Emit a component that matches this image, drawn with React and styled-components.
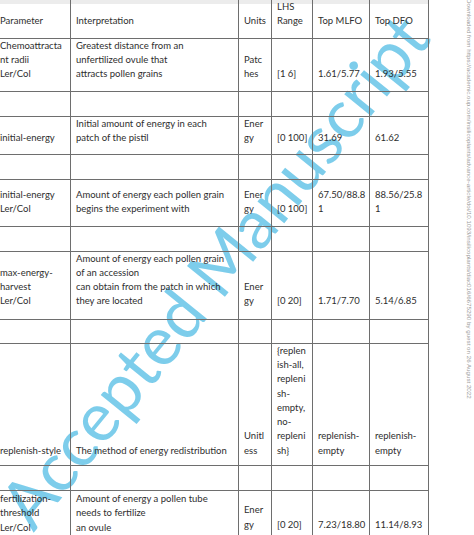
import React from "react";
import styled, { createGlobalStyle } from "styled-components";

const GlobalStyle = createGlobalStyle`
  html, body { margin: 0; padding: 0; background: #fff; }
  body { font-family: Lato, "Liberation Sans", sans-serif; }
`;

const Page = styled.div`
  position: relative;
  width: 474px;
  height: 535px;
  overflow: hidden;
  display: flex;
  align-items: flex-start;
  background: #fff;
`;

const Table = styled.table`
  position: relative;
  z-index: 1;
  flex: none;
  border-collapse: collapse;
  table-layout: fixed;
  width: 434px;
  margin: -1px 0 0 -6px;
  font-family: Lato, "Liberation Sans", sans-serif;
  font-size: 9.5px;
  line-height: 14.25px;
  color: #2e2e2e;
`;

const Row = styled.tr`
  height: ${(p) => p.$h - 0.5}px;
`;

const Cell = styled.td`
  border: 1px solid #6e6e6e;
  padding: 0 2px ${(p) => p.$pb}px 5px;
  vertical-align: bottom;
  white-space: nowrap;
  overflow: hidden;
`;

const HeadCell = styled(Cell).attrs({ as: "th" })`
  font-weight: normal;
  text-align: left;
  box-shadow: inset 0 4px 0 #ececec;
`;

const Line = styled.div``;

const SideNote = styled.div`
  flex: none;
  margin-left: auto;
  margin-right: 1px;
  margin-top: -1px;
  writing-mode: vertical-rl;
  white-space: nowrap;
  font-family: "Liberation Sans", Arial, sans-serif;
  font-size: 6.2px;
  line-height: 7px;
  color: #9a9a9a;
`;

const Watermark = styled.div`
  position: absolute;
  left: 213px;
  top: 270px;
  transform: translate(-50%, -50%) rotate(-51deg);
  font-family: Lato, "Liberation Sans", sans-serif;
  font-size: 68px;
  line-height: 1;
  white-space: nowrap;
  color: rgba(92, 192, 230, 0.8);
  pointer-events: none;
  z-index: 0;
`;

const widths = [76, 168, 33, 41, 57, 59];

const header = ["Parameter", "Interpretation", "Units", ["LHS", "Range"], "Top MLFO", "Top DFO"];

const rows = [
  {
    h: 54,
    pb: 10,
    cells: [
      ["Chemoattracta", "nt radii", "Ler/Col"],
      ["Greatest distance from an", "unfertilized ovule that", "attracts pollen grains"],
      ["Patc", "hes"],
      ["[1 6]"],
      ["1.61/5.77"],
      ["1.93/5.55"],
    ],
  },
  { h: 24, spacer: true },
  {
    h: 38,
    pb: 9,
    cells: [
      ["initial-energy"],
      ["Initial amount of energy in each", "patch of the pistil"],
      ["Ener", "gy"],
      ["[0 100]"],
      ["31.69"],
      ["61.62"],
    ],
  },
  { h: 25, spacer: true },
  {
    h: 48,
    pb: 9.5,
    cells: [
      ["initial-energy", "Ler/Col"],
      ["Amount of energy each pollen grain", "begins the experiment with"],
      ["Ener", "gy"],
      ["[0 100]"],
      ["67.50/88.8", "1"],
      ["88.56/25.8", "1"],
    ],
  },
  { h: 25, spacer: true },
  {
    h: 67,
    pb: 10,
    cells: [
      ["max-energy-", "harvest", "Ler/Col"],
      [
        "Amount of energy each pollen grain",
        "of an accession",
        "can obtain from the patch in which",
        "they are located",
      ],
      ["Ener", "gy"],
      ["[0 20]"],
      ["1.71/7.70"],
      ["5.14/6.85"],
    ],
  },
  { h: 24, spacer: true },
  {
    h: 122,
    pb: 7,
    cells: [
      ["replenish-style"],
      ["The method of energy redistribution"],
      ["Unitl", "ess"],
      ["{replen", "ish-all,", "repleni", "sh-", "empty,", "no-", "repleni", "sh}"],
      ["replenish-", "empty"],
      ["replenish-", "empty"],
    ],
  },
  { h: 26, spacer: true },
  {
    h: 54,
    pb: [9, 9, 12, 12, 12, 12],
    cells: [
      ["fertilization-", "threshold", "Ler/Col"],
      ["Amount of energy a pollen tube", "needs to fertilize", "an ovule"],
      ["Ener", "gy"],
      ["[0 20]"],
      ["7.23/18.80"],
      ["11.14/8.93"],
    ],
  },
];

const renderLines = (c) =>
  (Array.isArray(c) ? c : [c]).map((t, i) => <Line key={i}>{t}</Line>);

const padFor = (pb, i) => (Array.isArray(pb) ? pb[i] : pb);

export default function App() {
  return (
    <>
      <GlobalStyle />
      <Page>
        <Watermark>Accepted Manuscript</Watermark>
        <Table>
          <colgroup>
            {widths.map((w, i) => (
              <col key={i} style={{ width: w }} />
            ))}
          </colgroup>
          <tbody>
            <Row $h={39}>
              {header.map((h, i) => (
                <HeadCell key={i} $pb={9}>
                  {renderLines(h)}
                </HeadCell>
              ))}
            </Row>
            {rows.map((r, ri) => (
              <Row key={ri} $h={r.h}>
                {r.spacer
                  ? widths.map((_, i) => (
                      <Cell key={i} $pb={9}>
                        &nbsp;
                      </Cell>
                    ))
                  : r.cells.map((c, i) => (
                      <Cell key={i} $pb={padFor(r.pb, i)}>
                        {renderLines(c)}
                      </Cell>
                    ))}
              </Row>
            ))}
          </tbody>
        </Table>
        <SideNote>
          Downloaded from https://academic.oup.com/insilicoplants/advance-article/doi/10.1093/insilicoplants/diac016/6675290 by guest on 26 August 2022
        </SideNote>
      </Page>
    </>
  );
}
